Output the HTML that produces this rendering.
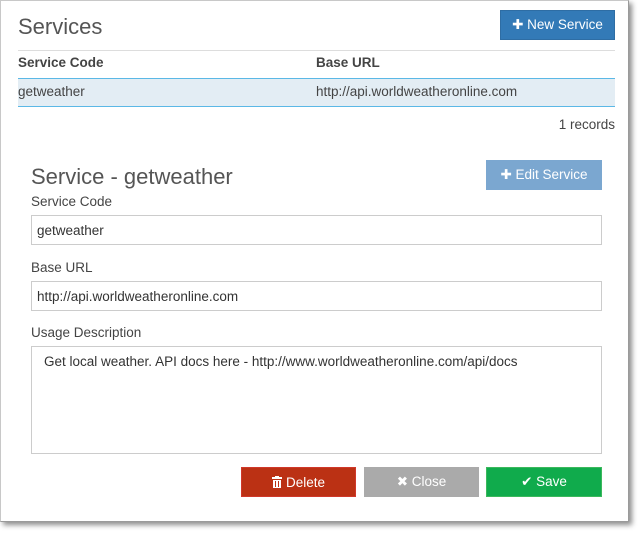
<!DOCTYPE html>
<html><head><style>
*{box-sizing:border-box;margin:0;padding:0}
body{width:642px;height:537px;background:#fff;font-family:"Liberation Sans",sans-serif;color:#333;font-size:13.5px;position:relative;overflow:hidden}
.win{position:absolute;left:0;top:0;width:629px;height:522px;background:#fff;border:1px solid #9a9a9a;border-top-color:#c8c8c8;border-left-color:#c8c8c8;box-shadow:3px 3px 5px rgba(0,0,0,.45)}
.a{position:absolute;white-space:nowrap}
.btn{position:absolute;color:#fff;text-align:center;font-size:13.5px;display:flex;align-items:center;justify-content:center;gap:4px}
.inp{position:absolute;left:31px;width:571px;border:1px solid #ccc;padding-left:5px;display:flex;align-items:center;font-size:13.5px;color:#333}
</style></head><body>
<div class="win"></div>
<div class="a" style="left:18px;top:14px;font-size:22px;color:#555">Services</div>
<div class="btn" style="left:500px;top:10px;width:115px;height:30px;background:#337ab7;border:1px solid #2e6da4">✚ New Service</div>
<div class="a" style="left:18px;top:50px;width:597px;height:1px;background:#ddd"></div>
<div class="a" style="left:18px;top:55px;font-weight:bold;color:#444">Service Code</div>
<div class="a" style="left:316px;top:55px;font-weight:bold;color:#444">Base URL</div>
<div class="a" style="left:18px;top:78px;width:597px;height:29px;background:#e3edf4;border-top:1px solid #5bb8e6;border-bottom:1px solid #5bb8e6"></div>
<div class="a" style="left:18px;top:84px;color:#444">getweather</div>
<div class="a" style="left:316px;top:84px;color:#444">http://api.worldweatheronline.com</div>
<div class="a" style="left:530px;top:117px;width:85px;text-align:right;color:#444">1 records</div>
<div class="a" style="left:31px;top:164px;font-size:22px;color:#555">Service - getweather</div>
<div class="btn" style="left:486px;top:160px;width:116px;height:30px;background:#7ba7d0">✚ Edit Service</div>
<div class="a" style="left:31px;top:194px;color:#444">Service Code</div>
<div class="inp" style="top:215px;height:30px">getweather</div>
<div class="a" style="left:31px;top:260px;color:#444">Base URL</div>
<div class="inp" style="top:281px;height:30px">http://api.worldweatheronline.com</div>
<div class="a" style="left:31px;top:325px;color:#444">Usage Description</div>
<div class="inp" style="top:346px;height:108px;align-items:flex-start;padding:7px 0 0 12px">Get local weather. API docs here - http://www.worldweatheronline.com/api/docs</div>
<div class="btn" style="left:241px;top:467px;width:115px;height:30px;background:#bb3114;border:1px solid #d0382a"><svg width="10" height="12" viewBox="0 0 10 12"><rect x="0" y="1" width="10" height="2" fill="#fff"/><rect x="3" y="0" width="4" height="1.5" fill="#fff"/><path d="M1 4h8v8H1z" fill="#fff"/><path d="M3.5 5v6M6.5 5v6" stroke="#bb3114" stroke-width="1"/></svg>Delete</div>
<div class="btn" style="left:364px;top:467px;width:115px;height:30px;background:#aaa">✖ Close</div>
<div class="btn" style="left:486px;top:467px;width:116px;height:30px;background:#10ab4c;border:1px solid #3cb85c">✔ Save</div>
</body></html>
